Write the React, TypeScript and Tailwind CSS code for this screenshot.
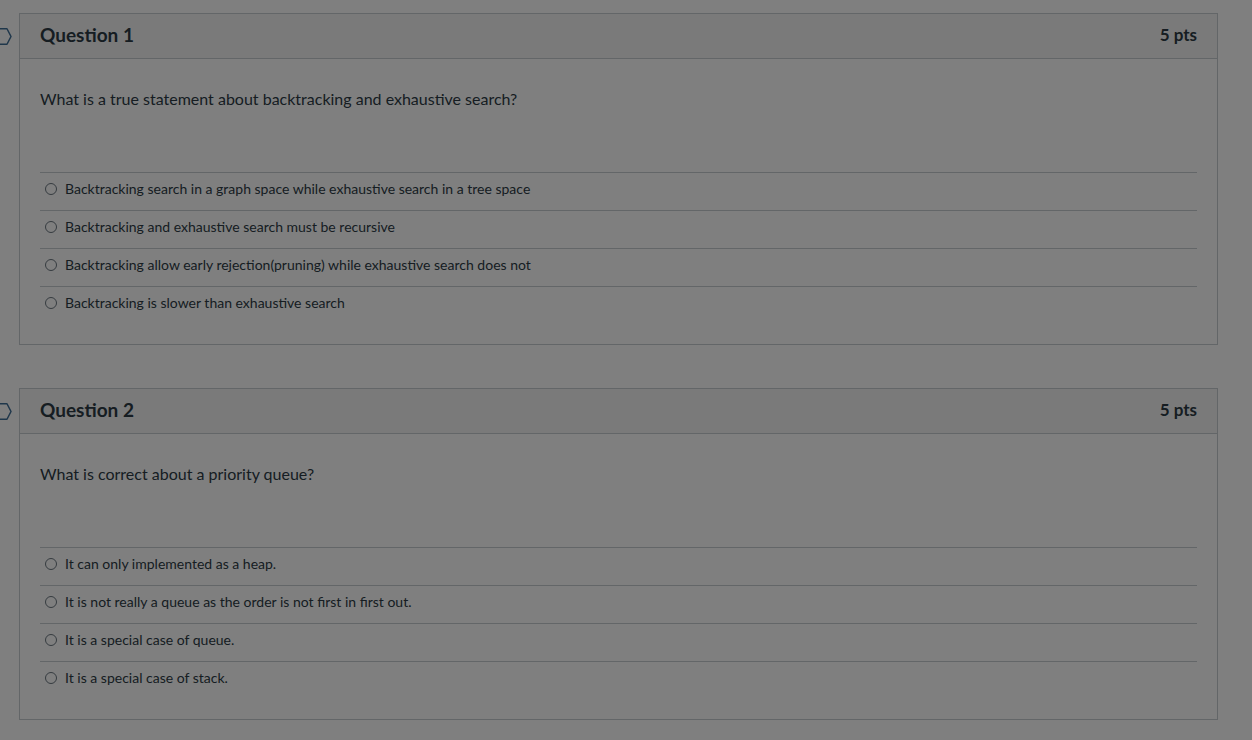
import React from 'react'

type Question = {
  title: string
  points: string
  text: string
  answers: string[]
}

const questions: Question[] = [
  {
    title: 'Question 1',
    points: '5 pts',
    text: 'What is a true statement about backtracking and exhaustive search?',
    answers: [
      'Backtracking search in a graph space while exhaustive search in a tree space',
      'Backtracking and exhaustive search must be recursive',
      'Backtracking allow early rejection(pruning) while exhaustive search does not',
      'Backtracking is slower than exhaustive search',
    ],
  },
  {
    title: 'Question 2',
    points: '5 pts',
    text: 'What is correct about a priority queue?',
    answers: [
      'It can only implemented as a heap.',
      'It is not really a queue as the order is not first in first out.',
      'It is a special case of queue.',
      'It is a special case of stack.',
    ],
  },
]

function FlagMarker() {
  return (
    <svg
      className="absolute left-[-19px] top-[14px] overflow-visible"
      width="12"
      height="18"
      viewBox="0 0 12 18"
      fill="none"
    >
      <polygon
        points="-4,0.75 6,0.75 10,8.5 6,16.25 -4,16.25"
        stroke="#3f6e96"
        strokeWidth="1.5"
        strokeLinejoin="round"
      />
    </svg>
  )
}

function QuestionCard({ q }: { q: Question }) {
  return (
    <div className="relative w-[1199px] border border-[#c7cdd1] bg-white">
      <FlagMarker />
      {/* header */}
      <div className="flex h-[45px] items-center justify-between border-b border-[#c7cdd1] bg-[#f5f5f5] px-[20px] pb-[4px]">
        <h2 className="text-[19px] font-bold leading-none">{q.title}</h2>
        <span className="text-[17px] font-bold leading-none">{q.points}</span>
      </div>

      {/* body */}
      <div className="px-[20px] pt-[28px] pb-[20px]">
        <p className="text-[16px] leading-[24px]">{q.text}</p>
        <div className="mt-[61px]">
          {q.answers.map((a) => (
            <label
              key={a}
              className="flex items-center gap-[8px] border-t border-[#c7cdd1] pt-[7px] pb-[12px] pl-[5px]"
            >
              <span className="h-[12px] w-[12px] shrink-0 rounded-full border border-[#6b7780] bg-white" />
              <span className="text-[14px] leading-[18px]">{a}</span>
            </label>
          ))}
        </div>
      </div>
    </div>
  )
}

export default function App() {
  return (
    <div className="min-h-screen bg-white font-['Lato','Noto_Sans',sans-serif] text-[#2d3b45]">
      <div className="flex flex-col gap-[43px] pt-[13px] pl-[19px] pb-[40px]">
        {questions.map((q) => (
          <QuestionCard key={q.title} q={q} />
        ))}
      </div>

      {/* modal backdrop dimming the page */}
      <div className="fixed inset-0 bg-black/50" />
    </div>
  )
}
